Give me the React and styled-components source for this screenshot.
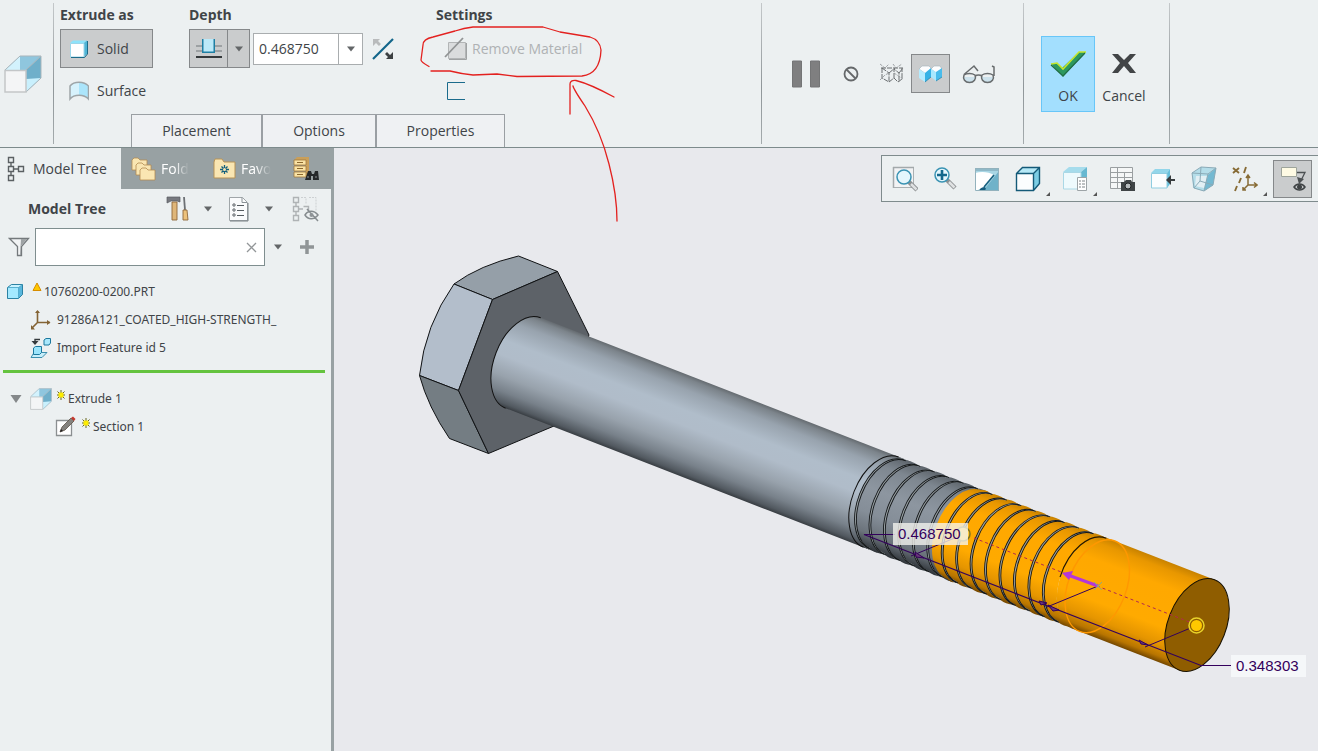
import React from "react";
import styled, { createGlobalStyle, css } from "styled-components";

const ink = "#404448";
const panel = "#ecf0f1";
const steel = "#98a1a3";

const GlobalStyle = createGlobalStyle`
  * { box-sizing: border-box; }
  html, body { margin: 0; padding: 0; }
  body {
    background: ${panel};
    color: ${ink};
    font-family: "Open Sans", "Noto Sans", sans-serif;
    font-size: 14px;
    line-height: 20px;
  }
  button, input { font: inherit; color: inherit; }
  svg { display: block; flex: none; }
`;

const Page = styled.div`
  position: relative;
  display: flex;
  flex-direction: column;
  min-height: 100vh;
  overflow: hidden;
`;

/* ---------- ribbon ---------- */

const Ribbon = styled.header`
  display: flex;
  height: 148px;
  border-bottom: 1px solid #7d8b8c;
`;

const Section = styled.section`
  position: relative;
  display: flex;
  flex: none;
  width: ${(p) => p.$width}px;
  padding: ${(p) => p.$pad || "0"};
  &::after {
    content: "";
    position: absolute;
    right: 0;
    top: 3px;
    bottom: 3px;
    width: 1px;
    background: linear-gradient(#c4c8ca, #8f9699 60%, #a4abad);
  }
`;

const ToolSection = styled(Section)`
  flex-direction: column;
  justify-content: space-between;
`;

const Groups = styled.div`
  display: flex;
  padding: 5px 0 0 6px;
`;

const Group = styled.div`
  width: ${(p) => p.$width}px;
`;

const Heading = styled.h2`
  margin: 0 0 4px;
  font-size: 14px;
  line-height: 20px;
  font-weight: 700;
`;

const PlainButton = styled.button`
  display: flex;
  align-items: center;
  padding: 0;
  border: 1px solid transparent;
  background: none;
  cursor: pointer;
`;

const pressed = css`
  background: #cacccd;
  border-color: #85888a;
`;

const ModeButton = styled(PlainButton)`
  width: 93px;
  height: 39px;
  margin-bottom: 3px;
  padding-left: 8px;
  gap: 8px;
  white-space: nowrap;
  &:disabled { color: #afb2b4; }
  ${(p) => p.$pressed && pressed}
`;

const SettingButton = styled(ModeButton)`
  width: 160px;
  padding-left: 7px;
  gap: 4px;
`;

const DepthRow = styled.div`
  display: flex;
  align-items: center;
`;

const SplitButton = styled(PlainButton)`
  justify-content: center;
  width: ${(p) => p.$width}px;
  height: 39px;
  ${pressed}
  & + & { border-left: 0; }
`;

const Combo = styled.div`
  display: flex;
  width: 110px;
  height: 32px;
  margin: 0 8px 0 3px;
  border: 1px solid #a9adaf;
  background: #fff;
`;

const ComboInput = styled.input`
  flex: 1;
  min-width: 0;
  padding: 0 5px;
  border: 0;
  background: none;
`;

const ComboArrow = styled(PlainButton)`
  justify-content: center;
  width: 24px;
  border: 0;
  border-left: 1px solid #a9adaf;
`;

const Tabs = styled.nav`
  display: flex;
  padding-left: 77px;
`;

const RibbonTab = styled.button`
  width: ${(p) => p.$width}px;
  height: 33px;
  padding: 0;
  border: 1px solid #9a9fa3;
  border-bottom: 0;
  background: #eff1f3;
  cursor: pointer;
`;

const IconButton = styled(PlainButton)`
  justify-content: center;
  width: ${(p) => p.$size || 39}px;
  height: 39px;
  ${(p) => p.$pressed && pressed}
`;

const PreviewSection = styled(Section)`
  align-items: center;
  & > * { flex: none; }
`;

const ChoiceButton = styled(PlainButton)`
  flex-direction: column;
  width: ${(p) => p.$width}px;
  height: 76px;
  padding-top: 13px;
  gap: 8px;
  ${(p) => p.$active && css`
    background: #a3dffe;
    border-color: #68c6f8;
  `}
`;

/* ---------- side panel ---------- */

const Work = styled.main`
  display: flex;
  flex: 1;
`;

const Side = styled.aside`
  flex: none;
  width: 334px;
  border-right: 3px solid ${steel};
`;

const SideTabs = styled.div`
  display: flex;
  height: 41px;
  background: ${steel};
`;

const SideTab = styled.button`
  display: flex;
  align-items: center;
  width: ${(p) => p.$width}px;
  gap: ${(p) => (p.$active ? 8 : 4)}px;
  padding: 0 0 0 ${(p) => p.$indent}px;
  border: 0;
  background: ${(p) => (p.$active ? panel : "none")};
  color: ${(p) => (p.$active ? ink : "#fff")};
  white-space: nowrap;
  cursor: pointer;
`;

const Faded = styled.span`
  mask-image: linear-gradient(90deg, #000 50%, transparent);
`;

const TreeHeader = styled.div`
  display: flex;
  align-items: center;
  height: 39px;
  padding-left: 28px;
`;

const TreeTitle = styled(Heading)`
  width: 137px;
  margin: 0;
`;

const SmallButton = styled(PlainButton)`
  justify-content: center;
  width: ${(p) => p.$width || 24}px;
  height: 28px;
  border: 0;
`;

const SearchRow = styled.div`
  display: flex;
  align-items: center;
  padding-left: 8px;
`;

const SearchBox = styled.label`
  display: flex;
  align-items: center;
  width: 230px;
  height: 38px;
  margin-left: 5px;
  border: 1px solid #7f8e8f;
  background: #fff;
`;

const SearchInput = styled.input`
  flex: 1;
  min-width: 0;
  border: 0;
  outline: 0;
  background: none;
`;

const Tree = styled.ul`
  margin: 0;
  padding: 12px 0 0;
  list-style: none;
  font-family: "Noto Sans", "Open Sans", sans-serif;
  font-size: 12px;
`;

const TreeRow = styled.li`
  display: flex;
  align-items: center;
  height: 28px;
  gap: ${(p) => p.$gap}px;
  padding-left: ${(p) => p.$indent}px;
  white-space: nowrap;
`;

const Marked = styled.span`
  display: flex;
  gap: 2px;
`;

const InsertLine = styled.hr`
  height: 3px;
  margin: 8px 6px 0 3px;
  border: 0;
  background: #64c33f;
`;

/* ---------- model view ---------- */

const Canvas = styled.section`
  position: relative;
  display: flex;
  flex: 1;
  flex-direction: column;
  align-items: flex-end;
  padding-top: 7px;
  background: #e8e9ed;
`;

const ViewBar = styled.div`
  position: relative;
  display: flex;
  align-items: center;
  height: 47px;
  padding: 0 6px 0 10px;
  border: 1px solid #7f8b8d;
  border-right: 0;
  background: ${panel};
`;

const ViewButton = styled(PlainButton)`
  position: relative;
  width: ${(p) => p.$width || 41}px;
  height: 38px;
  border: 0;
`;

const PinnedButton = styled(IconButton)`
  height: 38px;
`;

const Corner = styled.i`
  position: absolute;
  left: 31px;
  bottom: 2px;
  border: 2px solid #555;
  border-top-color: transparent;
  border-left-color: transparent;
`;

const Model = styled.svg`
  position: absolute;
  left: 0;
  top: 0;
`;

const Dimension = styled.output`
  position: absolute;
  left: ${(p) => p.$x}px;
  top: ${(p) => p.$y}px;
  width: 75px;
  padding: 0 5px;
  background: ${(p) => (p.$solid ? "#f5f7f9" : "rgba(245, 245, 240, 0.78)")};
  color: #33005c;
  font-family: "Liberation Sans", Arial, sans-serif;
  font-size: 15px;
  line-height: 22px;
`;

const Markup = styled.svg`
  position: absolute;
  left: 0;
  top: 0;
  pointer-events: none;
`;

/* ---------- icons ---------- */

const Icon = ({ w = 24, h = 24, box, children }) => (
  <svg width={w} height={h} viewBox={box || `0 0 ${w} ${h}`} fill="none" aria-hidden="true">
    {children}
  </svg>
);

const Arrow = () => (
  <Icon w={10} h={6}><path d="M1 0.5h8L5 5.5z" fill="#636668" /></Icon>
);

const ExtrudeIcon = ({ w = 38 }) => (
  <Icon w={w} h={w} box="0 0 38 38">
    <path d="M16 1h21L22 15H1z" fill="#8fc6de" />
    <path d="M16 1L1 15h15z" fill="#d3f2fd" />
    <path d="M37 1v22L22 37V15z" fill="#6fafca" />
    <path d="M37 23L22 37V24z" fill="#c9f0fd" />
    <path d="M16 1h21v22L22 37M37 1L22 15M16 1L1 15" stroke="#a9b5bb" />
    <path d="M1 15.500h21V37H1z" fill="#f4f5f6" stroke="#c3c6c8" strokeWidth="1.500" />
  </Icon>
);

const SolidIcon = () => (
  <Icon w={20} h={20}>
    <path d="M1 4l3-2.500h14l-3 2.500z" fill="#8de3fb" />
    <path d="M15 4l3-2.500V15l-3 3z" fill="#4fb5d6" />
    <path d="M1.500 4.500H15V18H1.500z" fill="#fff" stroke="#9bd6ea" />
    <path d="M18.500 2v13L15.500 18.500H2" stroke="#1c6b8a" />
  </Icon>
);

const SurfaceIcon = () => (
  <Icon w={20} h={20}>
    <path d="M1 5C5 0 15 0 19.500 5v13C15 13 5 13 1 18z" fill="#abe5fb" />
    <path d="M1 5C4 2 7 1.500 10 1.500v13C6 14.500 3 16 1 18z" fill="#d7f2fc" />
    <path d="M1 18V5C5 0 15 0 19.500 5v13C15 13 5 13 1 18z" stroke="#9ea5a8" strokeWidth="1.500" />
  </Icon>
);

const DepthIcon = () => (
  <Icon w={26} h={22}>
    <path d="M0 8h26M0 13h26" stroke="#8f9395" strokeWidth="1.500" />
    <path d="M6 1v14h13V1z" fill="#bce9f8" />
    <path d="M6 1h1.500v13H6zM17.500 1H19v14H6v-1.500h11.500z" fill="#1e7fa3" />
    <path d="M0 19h26" stroke="#35393b" strokeWidth="2" />
  </Icon>
);

const FlipIcon = () => (
  <Icon w={22} h={22}>
    <path d="M1 21L21 1" stroke="#12658a" strokeWidth="2.200" />
    <path d="M1 1h7L6 3l3 3-2 2-3-3-3 3z" fill="#b9bbbc" />
    <path d="M21 21h-7l2-2-3-3 2-2 3 3 3-3z" fill="#3c4042" />
  </Icon>
);

const RemoveIcon = () => (
  <Icon w={24} h={24}>
    <path d="M4.500 5.500h17v16h-17z" fill="#dadcdd" stroke="#b2b5b6" />
    <path d="M22.500 6v16.500H5" stroke="#9fa2a3" />
    <path d="M1 20L19 1" stroke="#919495" strokeWidth="1.800" />
  </Icon>
);

const BracketIcon = () => (
  <Icon w={24} h={20}><path d="M21 1.500H3.500v17H21" stroke="#1a6b8c" /></Icon>
);

const PauseIcon = () => (
  <Icon w={30} h={28}>
    <path d="M1.500 1h9v26h-9zM19.500 1h9v26h-9z" fill="#7f7f80" stroke="#747576" />
  </Icon>
);

const NoneIcon = () => (
  <Icon w={16} h={16}>
    <circle cx="8" cy="8" r="6.500" stroke="#65686a" strokeWidth="1.800" />
    <path d="M3.500 3.500l9 9" stroke="#65686a" strokeWidth="1.800" />
  </Icon>
);

const WireIcon = () => (
  <Icon w={26} h={22}>
    <path d="M2 5h22M3 5v10l7 4 5-4 4 4 4-3V5M3 5l7 5v9M10 10l6-5M15 15V6l5 4v9M20 10l4-5" stroke="#6b6f71" strokeDasharray="5 1" />
    <path d="M1 1l5 4 4-4M14 1l3 4 6-4M1 17l5-5 4-2M15 10l9 6" stroke="#8d9193" strokeWidth="0.800" strokeDasharray="3 1" />
  </Icon>
);

const ShadedIcon = () => (
  <Icon w={26} h={18}>
    <path d="M1 4l3-3h7l3 3-6 5zM13 4l3-3h6l2 3-6 4z" fill="#fdfdfe" stroke="#a3b4bb" strokeWidth="0.600" />
    <path d="M1 4l6 4v9l-6-4z" fill="#b5ecff" />
    <path d="M7 8l6-5v9l-6 5z" fill="#35b2e6" />
    <path d="M13 4l5 3v9l-5-4z" fill="#a9e8ff" />
    <path d="M18 7l6-4v9l-6 4z" fill="#49bcec" />
    <path d="M7 17l6-5M18 16l6-4" stroke="#2787ad" strokeWidth="0.800" />
  </Icon>
);

const GlassesIcon = () => (
  <Icon w={36} h={22}>
    <path d="M3 14h11v2c-1 4-9 5-11 1zM21 14h11v2c-1 4-9 5-11 1z" fill="#cde2ec" />
    <path d="M3 12c3-2 8-2 11 0 1.500 4-1 7.500-5.500 7.500S1.500 16 3 12zM21 12c3-2 8-2 11 0 1.500 4-1 7.500-5.500 7.500S19.500 16 21 12zM14.500 13c1-1.500 5-1.500 6 0M3 11.500L13 3l4 5M33 13V4l-2-1" stroke="#686c6e" strokeWidth="1.500" />
  </Icon>
);

const OkIcon = () => (
  <Icon w={38} h={28}>
    <path d="M2 14l5-1 6 5L30 2h7L14 27z" fill="#2c985f" />
    <path d="M2 14l6-1 6 6L30 2h7" stroke="#c5e52b" strokeWidth="1.600" />
    <path d="M2 15l12 11L36 3" stroke="#226d45" strokeWidth="1.200" />
  </Icon>
);

const CancelIcon = () => (
  <Icon w={26} h={28}>
    <path d="M1 4h6l6 6 6-6h6l-8 9 8 10h-6l-6-7-6 7H1l8-10z" fill="#424547" />
  </Icon>
);

const NodesIcon = ({ color = "#5b6063" }) => (
  <Icon w={18} h={26}>
    <path d="M1.500 1.500h5v5h-5zM1.500 10.500h5v5h-5zM1.500 19.500h5v5h-5zM11.500 10.500h5v5h-5zM4 7v3M4 16v3M7 13h4" stroke={color} strokeWidth="1.400" />
  </Icon>
);

const folder = "M0 2l2-2h4l2 2h7v10H0z";

const FoldersIcon = () => (
  <Icon w={26} h={26}>
    {[[1, 2], [5, 7], [9, 12]].map(([x, y]) => (
      <path key={x} d={folder} transform={`translate(${x} ${y})`} fill="#fae6b2" stroke="#b28c50" strokeWidth="0.800" />
    ))}
  </Icon>
);

const FavoriteIcon = () => (
  <Icon w={24} h={22}>
    <path d="M1 4l1-3h7l2 3h11v16H1z" fill="#fae6b2" stroke="#b89356" />
    <path d="M11.500 7v9M7 11.500h9M8.500 8.500l6 6M14.500 8.500l-6 6" stroke="#14607d" strokeWidth="1.300" />
    <circle cx="11.500" cy="11.500" r="1.500" fill="#fae6b2" />
  </Icon>
);

const CabinetIcon = () => (
  <Icon w={28} h={28}>
    <path d="M2 5l3-3h12l-3 3zM14 5l3-3v18l-3 3z" fill="#c99f5a" />
    <path d="M2 5h12v5H2zM2 11h12v5H2zM2 17h12v5H2z" fill="#fae3a6" stroke="#a17a3e" strokeWidth="0.800" />
    <path d="M5 7.500h6M5 13.500h6M5 19.500h6" stroke="#8d692e" />
    <path d="M13 25l3-9h3l1 3h2l1-3h3l1 9h-6v-4h-2v4z" fill="#25282a" />
    <path d="M15 22h2M23 22h2" stroke="#8c9194" />
  </Icon>
);

const HammerIcon = () => (
  <Icon w={24} h={28}>
    <path d="M2 2h13v5l-3-1H6L2 8z" fill="#77797f" stroke="#595b61" strokeWidth="0.700" />
    <path d="M7 7h5v18H7z" fill="#dfb679" stroke="#8e683b" strokeWidth="0.900" />
    <path d="M19 2l1 13" stroke="#6c7074" strokeWidth="1.800" />
    <path d="M18 15h4l1 10h-5z" fill="#edc27c" stroke="#8e683b" strokeWidth="0.900" />
  </Icon>
);

const ListIcon = () => (
  <Icon w={22} h={26}>
    <path d="M1.500 1.500h13l5 5v18h-18z" fill="#fafbfc" stroke="#a0a6a9" />
    <path d="M14 1.500v5h5" stroke="#8a9296" />
    <path d="M20 7v18H2" stroke="#788084" />
    {[9, 14, 19].map((y) => (
      <g key={y} stroke="#555b60"><circle cx="6" cy={y} r="1.200" /><path d={`M9 ${y + 0.5}h7`} /></g>
    ))}
  </Icon>
);

const HiddenNodesIcon = () => (
  <Icon w={28} h={28}>
    <path d="M2.500 2.500h5v5h-5zM2.500 11.500h5v5h-5zM2.500 20.500h5v5h-5zM12.500 11.500h5v5M5 8v3M5 17v3M8 14h4" stroke="#afb3b5" strokeWidth="1.400" />
    <path d="M10 2.500h5v7M18 2.500h7v14" stroke="#ccd0d2" strokeDasharray="2 1" />
    <path d="M14 20c3-5 9-5 13 0-4 5-10 5-13 0zM16 14l11 12" stroke="#868c8f" strokeWidth="1.500" />
    <circle cx="20.500" cy="20" r="2" fill="#8e9497" />
  </Icon>
);

const FunnelIcon = () => (
  <Icon w={22} h={20}>
    <path d="M1.500 1.500h19l-7 8v9h-4v-9z" fill="#f1f3f4" stroke="#74797c" strokeWidth="1.300" />
    <path d="M13 2h6l-6 7v9h-1z" fill="#9ea3a5" />
  </Icon>
);

const ClearIcon = () => (
  <Icon w={11} h={11}><path d="M1 1l9 9M10 1l-9 9" stroke="#929698" strokeWidth="1.300" /></Icon>
);

const PlusIcon = () => (
  <Icon w={14} h={14}><path d="M7 0v14M0 7h14" stroke="#909597" strokeWidth="3.500" /></Icon>
);

const PartIcon = () => (
  <Icon w={18} h={18}>
    <path d="M1.500 4.500l4-3h11v10l-4 4h-11z" fill="#59b7dd" />
    <path d="M1.500 4.500l4-3h11l-4 3z" fill="#c8f3ff" />
    <path d="M1.500 4.500h11v11h-11z" fill="#a4e9ff" />
    <path d="M1.500 4.500l4-3h11v10l-4 4h-11z" stroke="#2c82a3" />
    <path d="M1.500 4.500h11v11M12.500 4.500l4-3" stroke="#4aa5c6" strokeWidth="0.800" />
  </Icon>
);

const WarnIcon = () => (
  <Icon w={10} h={10}><path d="M5 1l4 7.500H1z" fill="#ffc800" stroke="#d78d00" /></Icon>
);

const AxesIcon = () => (
  <Icon w={22} h={22}>
    <path d="M7.500 2v11.500H20M7.500 13.500L2 19" stroke="#836334" strokeWidth="1.600" />
    <path d="M5 4l2.500-3L10 4zM17 11l3.500 2.500L17 16zM1 16v4.500h4z" fill="#836334" />
  </Icon>
);

const ImportIcon = () => (
  <Icon w={22} h={22}>
    <path d="M10 2.500H5V6" stroke="#34393c" strokeWidth="1.400" />
    <path d="M1.500 4h7L5 8z" fill="#34393c" />
    <path d="M14 3l2-1.500h4.500V6L19 8h-5z" fill="#a9e8fc" stroke="#1c789d" />
    <path d="M1 20.500l3-5h13l-5 5z" fill="#c7eefa" stroke="#3c8fae" />
    <path d="M3.500 11l2-1.500h6v6l-2 2h-6z" fill="#9be5fc" stroke="#1c789d" />
  </Icon>
);

const ExpandIcon = () => (
  <Icon w={16} h={10}><path d="M0.500 1h11L6 9z" fill="#84888a" /></Icon>
);

const SparkIcon = () => (
  <Icon w={10} h={12}>
    <path d="M5 1v10M1 6h8M1.500 2.500l7 7M8.500 2.500l-7 7" stroke="#69691d" />
    <path d="M3 4h4v4H3z" fill="#fff100" stroke="#f5e000" />
  </Icon>
);

const SketchIcon = () => (
  <Icon w={22} h={22}>
    <path d="M1.500 4.500h15v15h-15z" fill="#fff" stroke="#8b8f91" strokeWidth="1.300" />
    <path d="M5 16l2-5 9-9 3 3-9 9z" fill="#84827e" stroke="#5d5145" strokeWidth="0.800" />
    <path d="M16 2l2-1.500L20.500 3 19 5z" fill="#c5392f" />
    <path d="M5 16l1-3 2 2z" fill="#222" />
  </Icon>
);

const Lens = ({ x, y, r }) => (
  <g>
    <path d={`M${x + r - 2} ${y + r - 2}l8 8`} stroke="#8d9193" strokeWidth="4.500" />
    <path d={`M${x + r} ${y + r}l5.500 5.500`} stroke="#dfe1e2" strokeWidth="2.500" />
    <circle cx={x} cy={y} r={r} fill="#e4f6fc" stroke="#3a93b3" strokeWidth="1.500" />
  </g>
);

const ZoomFitIcon = () => (
  <Icon w={26} h={26}>
    <path d="M1.500 1.500h20v20h-20z" fill="#f2f3f4" stroke="#aab0b2" />
    <path d="M1 1.500h21M1.500 1v21" stroke="#a3a9ab" strokeWidth="1.500" />
    <Lens x={12} y={11} r={7} />
  </Icon>
);

const ZoomInIcon = () => (
  <Icon w={26} h={26}>
    <Lens x={9} y={9} r={7} />
    <path d="M9 4v10M4 9h10" stroke="#14688c" strokeWidth="2.600" />
  </Icon>
);

const RepaintIcon = () => (
  <Icon w={26} h={26}>
    <path d="M1 2h24v23H1z" fill="#a9d6e4" />
    <path d="M25 5v20H9z" fill="#6fb2c9" />
    <path d="M1 7C8 5 15 6 20 9L9 22l-8 3z" fill="#fff" />
    <path d="M1 2h24v3H1z" fill="#8fb9c8" />
    <path d="M20 9L10 21" stroke="#17607f" strokeWidth="1.600" />
    <path d="M5 25c1-3 3-4 6-4l1 2-2 2z" fill="#175c7d" />
    <path d="M1.500 2.500h23v22h-23z" stroke="#93b2bd" />
  </Icon>
);

const BoxIcon = () => (
  <Icon w={26} h={26}>
    <path d="M1.500 7.500l6-6h17l-6 6z" fill="#b5e8f6" />
    <path d="M18.500 7.500l6-6v16l-6 7z" fill="#7ccde4" />
    <path d="M1.500 7.500h17v17h-17z" fill="#fbfdfe" />
    <path d="M1.500 7.500l6-6h17v16l-6 7h-17zM1.500 7.500h17v17M18.500 7.500l6-6" stroke="#145a78" strokeWidth="1.400" />
  </Icon>
);

const SavedViewIcon = () => (
  <Icon w={26} h={26}>
    <path d="M1 6l6-5h18l-6 5z" fill="#a6dcec" />
    <path d="M19 6l6-5v16l-6 5z" fill="#67b8d1" />
    <path d="M1.500 6.500H19V23H1.500z" fill="#eefafd" stroke="#aad8e6" />
    <path d="M15.500 11.500h9v13h-9z" fill="#fff" stroke="#9da4a7" />
    <path d="M17 15h2M17 18h2M17 21h2M20 15h3M20 18h3M20 21h3" stroke="#7d8487" />
  </Icon>
);

const ViewManagerIcon = () => (
  <Icon w={26} h={26}>
    <path d="M1.500 1.500h22v21h-22z" fill="#f5f7f7" />
    <path d="M1.500 1.500h22v21h-22zM1 6.500h22M1 11.500h22M1 16.500h14M8.500 2v20M15.500 6v12" stroke="#9a9fa1" />
    <path d="M12 16h3l2-2h5l1 2h3v9H12z" fill="#3f4446" />
    <circle cx="19" cy="20" r="3" fill="#b7bcbe" stroke="#202426" />
  </Icon>
);

const OrientIcon = () => (
  <Icon w={26} h={26}>
    <path d="M1 7l4-4h15l-3 4z" fill="#93d6ea" />
    <path d="M17 7l3-4v15l-3 4z" fill="#67bfdb" />
    <path d="M1.500 7.500H17V22H1.500z" fill="#fbfdfe" stroke="#8fcde1" />
    <path d="M25 14h-6" stroke="#383c3e" strokeWidth="2" />
    <path d="M21 9v10l-5-5z" fill="#383c3e" />
  </Icon>
);

const PerspectiveIcon = () => (
  <Icon w={26} h={26}>
    <path d="M1 7l9-6 15 1-3 17-10 6-10-3z" fill="#b4dde9" />
    <path d="M5 10h11l-3 12-9-2z" fill="#e2eff4" />
    <path d="M17 9l8-7-3 17-9 6z" fill="#74b9d1" />
    <path d="M1 7l9-6 15 1-3 17-9 6-10-3zM1 7l16 1 8-6M17 8l-4 17M10 1l-1 14-6 7M9 15l13 4" stroke="#8aaab7" />
  </Icon>
);

const DatumIcon = () => (
  <Icon w={26} h={26}>
    <path d="M1 2l6 5M7 2L1 7M14 1l-2 6M9 12l-2 5M5 20l-2 5" stroke="#876b35" strokeWidth="1.900" />
    <path d="M16 10v9h9M16 19l-5 5M14 12l2-3 2 3M22 16.500l3 2.500-3 2.500M11 21v3h3" stroke="#876b35" strokeWidth="1.500" />
  </Icon>
);

const AnnotationIcon = () => (
  <Icon w={28} h={28}>
    <path d="M2.500 2.500h15v9h-15z" fill="#fffbe4" stroke="#9ea49b" />
    <path d="M18 7.500h8l-4 8" stroke="#4c5052" strokeWidth="1.300" />
    <path d="M18 12l7 2-5 5z" fill="#4c5052" />
    <path d="M15 22c3-4 8-4 11 0-3 4-8 4-11 0z" stroke="#3f4345" strokeWidth="1.500" />
    <circle cx="20.500" cy="22" r="2.500" fill="#3f4345" />
  </Icon>
);

/* ---------- bolt drawing ---------- */

const RX = 29;
const R = 48.5;
const ROOT = 47.5;
const PITCH = 15.5;
const FIRST = -333;

const leftArc = (u, r = R) => `M${u} ${r}A${RX} ${r} 0 0 1 ${u} ${-r}`;

const ridge = (a, b) =>
  `${leftArc(a, ROOT)}Q${(a + b) / 2} ${-R - 1.5} ${b} ${-ROOT}` +
  `A${RX} ${ROOT} 0 0 0 ${b} ${ROOT}Q${(a + b) / 2} ${R + 1.5} ${a} ${ROOT}Z`;

const threads = Array.from({ length: 14 }, (_, i) => FIRST + i * PITCH);
const ORANGE_START = -250;

const Stops = ({ id, list }) => (
  <linearGradient id={id} gradientUnits="userSpaceOnUse" x1="0" y1={-R} x2="0" y2={R}>
    {list.map(([o, c]) => <stop key={o} offset={o} stopColor={c} />)}
  </linearGradient>
);

const Bolt = () => (
  <Model width="984" height="603" viewBox="334 148 984 603" fill="none" role="img" aria-label="Hex bolt with extrude preview">
    <defs>
      <Stops id="shank" list={[[0, "#656b70"], [0.04, "#7c848b"], [0.15, "#98a3ae"], [0.35, "#b0bdca"], [0.5, "#b0bcc9"], [0.7, "#98a2ac"], [0.85, "#78818a"], [0.96, "#525960"], [1, "#383d42"]]} />
      <Stops id="thread" list={[[0, "#5d646b"], [0.15, "#7e8790"], [0.4, "#8d96a0"], [0.65, "#858e98"], [0.85, "#6b737b"], [1, "#30353a"]]} />
      <Stops id="preview" list={[[0, "#c88200"], [0.08, "#e89700"], [0.25, "#ffa800"], [0.65, "#ffaa00"], [0.82, "#e59500"], [0.94, "#b87500"], [1, "#754800"]]} />
    </defs>

    <g stroke="#101214" strokeLinejoin="round">
      <path d="M454 284Q480 265 518.500 256L557.500 271.500 492.500 299.500Z" fill="#959fa8" />
      <path d="M454 284Q425 325 419.500 375.500L458.500 390.500 492.500 299.500Z" fill="#b3becb" />
      <path d="M419.500 375.500Q428 407 449.500 438.500L488.500 453.500 458.500 390.500Z" fill="#747d83" />
      <path d="M557.500 271.500L492.500 299.500 458.500 390.500 488.500 453.500 554 426 589 335Z" fill="#5d6268" />
    </g>

    <g transform="translate(1197 625) rotate(21.250)">
      <path d={`${leftArc(-723)}H${FIRST}V${R}Z`} fill="url(#shank)" />
      <path d={leftArc(-723)} stroke="#111" />
      <path d={`${leftArc(-339)}H${FIRST + 8}V${R}Z`} fill="url(#shank)" />
      <path d={leftArc(-339)} stroke="#111" />
      {threads.map((u, i) => (
        <g key={u}>
          <path d={ridge(u, u + PITCH)} fill={`url(#${i > 5 ? "preview" : "thread"})`} />
          {i === 5 && <path d={ridge(ORANGE_START, u + PITCH)} fill="url(#preview)" />}
          <path d={leftArc(u + 1, ROOT)} stroke="#98a0a3" strokeWidth="1.500" />
          <path d={leftArc(u, ROOT)} stroke="#15181a" strokeWidth="0.900" />
          <path d={leftArc(u + 2, ROOT)} stroke="#15181a" strokeWidth="0.900" />
        </g>
      ))}
      <path d={`${leftArc(-116)}H0V${R}Z`} fill="url(#preview)" />
      <path d="M-145 5A29 48 0 0 1 -116 -48" stroke="#241800" strokeWidth="1.200" />
      <ellipse cx="-107" cy="0" rx={RX} ry={R} stroke="#ff9800" strokeWidth="1.400" />
      <ellipse cx="0" cy="0" rx={RX} ry={R} fill="#8f5d00" stroke="#171000" />
    </g>

    <g stroke="#33005c">
      <path d="M895 534.500H864L1201 665.500H1231" strokeWidth="1.200" />
      <path d="M911 556L962 535M1047 607L1098 586M1145 647L1193 627" />
      <path d="M915 552l9 6-8-1zM1039 601l8 2-6 2zM1048 605l11 5-6 1zM1139 640l9 5-7-1z" fill="#6a3678" />
    </g>
    <path d="M974 538L1192 623" stroke="#b3284f" strokeDasharray="3 3" />
    <path d="M1098 586L1068 575" stroke="#b437d7" strokeWidth="3" />
    <path d="M1062 573l11-2-4 9z" fill="#b437d7" />
    <path d="M1094 582l8 8M1102 582l-8 8" stroke="#8fa77e" />
    <circle cx="963" cy="534" r="7" fill="#ffc83a" stroke="#7d7420" strokeWidth="1.500" />
    <circle cx="1196.500" cy="625.500" r="7.500" fill="#8f5d00" stroke="#e9d22a" strokeWidth="1.500" />
    <circle cx="1196.500" cy="625.500" r="5.500" fill="#ffc800" />
  </Model>
);

export default function App() {
  return (
    <>
      <GlobalStyle />
      <Page>
        <Ribbon>
          <Section $width={54} $pad="55px 0 0 4px"><ExtrudeIcon /></Section>

          <ToolSection $width={708}>
            <Groups>
              <Group $width={129}>
                <Heading>Extrude as</Heading>
                <ModeButton $pressed><SolidIcon />Solid</ModeButton>
                <ModeButton><SurfaceIcon />Surface</ModeButton>
              </Group>
              <Group $width={247}>
                <Heading>Depth</Heading>
                <DepthRow>
                  <SplitButton $width={39} aria-label="Depth option"><DepthIcon /></SplitButton>
                  <SplitButton $width={22} aria-label="More depth options"><Arrow /></SplitButton>
                  <Combo>
                    <ComboInput aria-label="Depth value" defaultValue="0.468750" />
                    <ComboArrow aria-label="Recent values"><Arrow /></ComboArrow>
                  </Combo>
                  <PlainButton aria-label="Flip direction"><FlipIcon /></PlainButton>
                </DepthRow>
              </Group>
              <Group $width={200}>
                <Heading>Settings</Heading>
                <SettingButton disabled><RemoveIcon />Remove Material</SettingButton>
                <SettingButton aria-label="Thicken sketch"><BracketIcon /></SettingButton>
              </Group>
            </Groups>
            <Tabs>
              <RibbonTab $width={131}>Placement</RibbonTab>
              <RibbonTab $width={114}>Options</RibbonTab>
              <RibbonTab $width={129}>Properties</RibbonTab>
            </Tabs>
          </ToolSection>

          <PreviewSection $width={262} $pad="0 0 0 19px">
            <IconButton $size={49} aria-label="Pause"><PauseIcon /></IconButton>
            <IconButton $size={42} aria-label="No preview"><NoneIcon /></IconButton>
            <IconButton aria-label="Wireframe preview"><WireIcon /></IconButton>
            <IconButton $pressed aria-label="Shaded preview"><ShadedIcon /></IconButton>
            <IconButton $size={58} aria-label="Verify"><GlassesIcon /></IconButton>
          </PreviewSection>

          <PreviewSection $width={146} $pad="0 0 0 17px">
            <ChoiceButton $width={54} $active><OkIcon />OK</ChoiceButton>
            <ChoiceButton $width={58}><CancelIcon />Cancel</ChoiceButton>
          </PreviewSection>
        </Ribbon>

        <Work>
          <Side>
            <SideTabs>
              <SideTab $width={121} $indent={7} $active><NodesIcon />Model Tree</SideTab>
              <SideTab $width={85} $indent={10} aria-label="Folder Browser"><FoldersIcon /><Faded>Fold</Faded></SideTab>
              <SideTab $width={80} $indent={7} aria-label="Favorites"><FavoriteIcon /><Faded>Favo</Faded></SideTab>
              <SideTab $width={45} $indent={6} aria-label="Search files"><CabinetIcon /></SideTab>
            </SideTabs>
            <TreeHeader>
              <TreeTitle>Model Tree</TreeTitle>
              <SmallButton aria-label="Tree settings"><HammerIcon /></SmallButton>
              <SmallButton $width={38} aria-label="Settings menu"><Arrow /></SmallButton>
              <SmallButton aria-label="Show"><ListIcon /></SmallButton>
              <SmallButton $width={36} aria-label="Show menu"><Arrow /></SmallButton>
              <SmallButton $width={36} aria-label="Hidden items"><HiddenNodesIcon /></SmallButton>
            </TreeHeader>
            <SearchRow>
              <FunnelIcon />
              <SearchBox>
                <SearchInput aria-label="Filter tree" />
                <SmallButton $width={26} aria-label="Clear"><ClearIcon /></SmallButton>
              </SearchBox>
              <SmallButton $width={26} aria-label="Filter menu"><Arrow /></SmallButton>
              <SmallButton $width={32} aria-label="Add filter"><PlusIcon /></SmallButton>
            </SearchRow>
            <Tree>
              <TreeRow $indent={6} $gap={8}><PartIcon /><Marked><WarnIcon />10760200-0200.PRT</Marked></TreeRow>
              <TreeRow $indent={30} $gap={5}><AxesIcon />91286A121_COATED_HIGH-STRENGTH_</TreeRow>
              <TreeRow $indent={30} $gap={5}><ImportIcon />Import Feature id 5</TreeRow>
            </Tree>
            <InsertLine />
            <Tree>
              <TreeRow $indent={10} $gap={4}><ExpandIcon /><ExtrudeIcon w={22} /><Marked><SparkIcon />Extrude 1</Marked></TreeRow>
              <TreeRow $indent={55} $gap={4}><SketchIcon /><Marked><SparkIcon />Section 1</Marked></TreeRow>
            </Tree>
          </Side>

          <Canvas>
            <Bolt />
            <Dimension $x={559} $y={375}>0.468750</Dimension>
            <Dimension $x={897} $y={507} $solid>0.348303</Dimension>
            <ViewBar>
              <ViewButton aria-label="Refit"><ZoomFitIcon /></ViewButton>
              <ViewButton aria-label="Zoom in"><ZoomInIcon /></ViewButton>
              <ViewButton aria-label="Repaint"><RepaintIcon /></ViewButton>
              <ViewButton $width={47} aria-label="Display style"><BoxIcon /><Corner /></ViewButton>
              <ViewButton $width={47} aria-label="Saved views"><SavedViewIcon /><Corner /></ViewButton>
              <ViewButton aria-label="View manager"><ViewManagerIcon /></ViewButton>
              <ViewButton aria-label="Orient"><OrientIcon /></ViewButton>
              <ViewButton aria-label="Perspective"><PerspectiveIcon /></ViewButton>
              <ViewButton aria-label="Datum display"><DatumIcon /><Corner /></ViewButton>
              <PinnedButton $pressed aria-label="Annotation display"><AnnotationIcon /></PinnedButton>
            </ViewBar>
          </Canvas>
        </Work>

        <Markup width="640" height="240" viewBox="0 0 640 240" fill="none" aria-hidden="true">
          <g stroke="#e3211f" strokeWidth="1.300" strokeLinecap="round" strokeLinejoin="round">
            <path d="M431 71H450Q462 74 473 75L497 74 517 76.500 582 76Q600 74 601 50 600 40 590 37L560 32 543 27H473Q464 28 455 31L433 37Q423 39 423 45L421 60Q421 62 429 66.500" />
            <path d="M570 114V84Q570 80 576 80.500 590 84 614 97M573 86Q574 90 585 106 601 132 609 164 617 195 617 221" />
          </g>
        </Markup>
      </Page>
    </>
  );
}
